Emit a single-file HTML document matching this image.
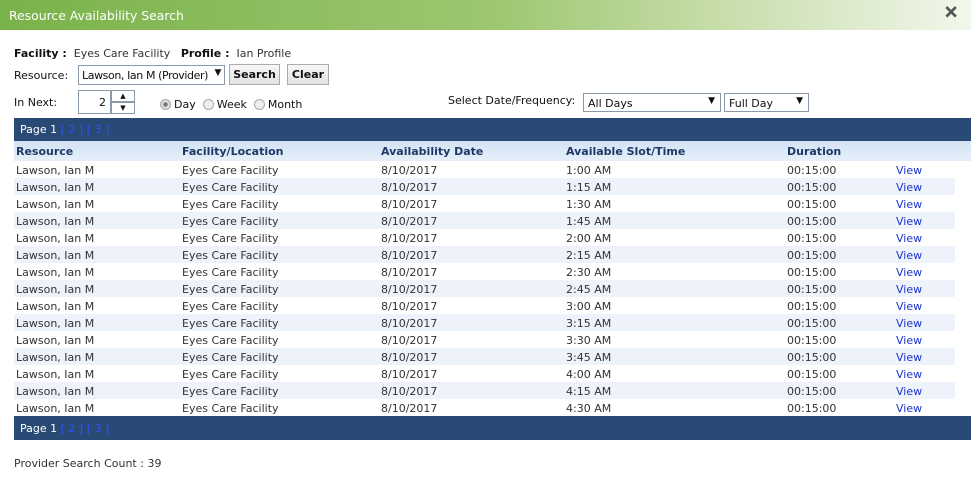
<!DOCTYPE html>
<html><head><style>
body{margin:0;width:971px;height:477px;overflow:hidden;background:#fff;font-family:"DejaVu Sans","Liberation Sans",sans-serif;font-size:11px;color:#333;position:relative}
.title{position:absolute;left:0;top:0;width:971px;height:30px;background:linear-gradient(to right,#7ab24a 0%,#9cc66e 50%,#c8deac 75%,#f2f7ec 100%);}
.title span{position:absolute;left:9px;top:8px;color:#fff;font-size:12.4px;font-family:"DejaVu Sans",sans-serif}
.x{position:absolute;left:944px;top:3px;font-size:17px;font-weight:900;color:#555;-webkit-text-stroke:1px #555}
.a{position:absolute;white-space:nowrap}
.b{font-weight:bold;color:#111}
.sel{position:absolute;border:1px solid #8a9aa8;background:#fff;height:18px;box-sizing:border-box;font-size:11px;padding:2px 4px;color:#111;white-space:nowrap;overflow:hidden}
.sel i{position:absolute;right:5px;top:2px;font-style:normal;font-size:9px}
.btn{position:absolute;border:1px solid #aaa;background:linear-gradient(#f8f8f8,#e2e2e2);height:21px;box-sizing:border-box;font-weight:bold;color:#111;text-align:center;padding-top:3px}
.bar{position:absolute;left:14px;width:957px;background:#284a75;color:#fff}
.bar span{color:#3050ff}
.hdr{position:absolute;left:14px;top:141px;width:957px;height:20px;background:linear-gradient(#d2e2f4,#e6eff9);font-weight:bold;color:#1d3a66}
.row{position:absolute;left:14px;width:941px;height:17px}
.row div,.hdr div{position:absolute;top:3px;white-space:nowrap}
.hdr div{top:4px}
.v{color:#1a33cc}
.radio{display:inline-block;width:11px;height:11px;border:1px solid #aaa;border-radius:50%;background:#eee;vertical-align:-2px;margin-right:3px;box-sizing:border-box}
</style></head><body>
<div class="title"><span>Resource Availability Search</span><div class="x">✕</div></div>
<div class="a" style="left:14px;top:47px"><b class="b">Facility :</b>&nbsp; Eyes Care Facility &nbsp; <b class="b">Profile :</b>&nbsp; Ian Profile</div>
<div class="a" style="left:14px;top:69px;color:#111">Resource:</div>
<div class="sel" style="left:78px;top:65px;width:147px;height:20px;padding:3px 3px;letter-spacing:-0.4px">Lawson, Ian M (Provider)<i style="background:#fff;right:3px">▼</i></div>
<div class="btn" style="left:229px;top:64px;width:51px">Search</div>
<div class="btn" style="left:287px;top:64px;width:42px">Clear</div>
<div class="a" style="left:14px;top:96px;color:#111">In Next:</div>
<div class="sel" style="left:78px;top:90px;width:33px;height:24px;text-align:right;padding-top:5px">2</div>
<div class="sel" style="left:111px;top:90px;width:24px;height:12px;padding:0;font-size:7px;text-align:center;line-height:10px">▲</div>
<div class="sel" style="left:111px;top:102px;width:24px;height:12px;padding:0;font-size:7px;text-align:center;line-height:10px">▼</div>
<div class="a" style="left:160px;top:98px;color:#111"><span class="radio" style="background:radial-gradient(#777 30%,#ddd 40%)"></span>Day &nbsp;<span class="radio"></span>Week &nbsp;<span class="radio"></span>Month</div>
<div class="a" style="left:448px;top:94px;color:#111">Select Date/Frequency:</div>
<div class="sel" style="left:583px;top:93px;width:138px;height:19px;padding-top:3px">All Days<i>▼</i></div>
<div class="sel" style="left:724px;top:93px;width:85px;height:19px;padding-top:3px">Full Day<i>▼</i></div>
<div class="bar" style="top:118px;height:23px"><div class="a" style="left:6px;top:5px">Page 1 <span>[ 2 ]</span> <span>[ 3 ]</span></div></div>
<div class="hdr"><div style="left:2px">Resource</div><div style="left:168px">Facility/Location</div><div style="left:367px">Availability Date</div><div style="left:552px">Available Slot/Time</div><div style="left:773px">Duration</div></div>
<div id="rows"></div>
<script>
var t=["1:00","1:15","1:30","1:45","2:00","2:15","2:30","2:45","3:00","3:15","3:30","3:45","4:00","4:15","4:30"],h="";
t.forEach(function(x,i){h+='<div class="row" style="top:'+(161+i*17)+'px;background:'+(i%2?'#eef2fa':'#fff')+'"><div style="left:2px">Lawson, Ian M</div><div style="left:168px">Eyes Care Facility</div><div style="left:367px">8/10/2017</div><div style="left:552px">'+x+' AM</div><div style="left:773px">00:15:00</div><div class="v" style="left:882px">View</div></div>';});
document.getElementById("rows").innerHTML=h;
</script>
<div class="bar" style="top:416px;height:24px"><div class="a" style="left:6px;top:6px">Page 1 <span>[ 2 ]</span> <span>[ 3 ]</span></div></div>
<div class="a" style="left:14px;top:457px">Provider Search Count : 39</div>
</body></html>
